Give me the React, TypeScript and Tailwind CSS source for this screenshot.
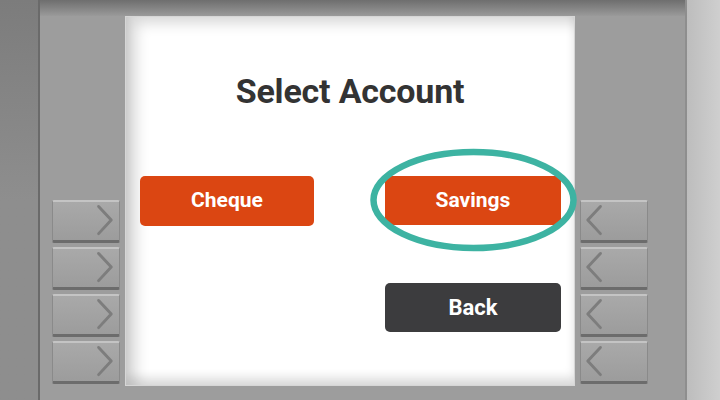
import React from 'react';

const font = { fontFamily: 'Roboto, "Liberation Sans", sans-serif' };

function SideKey({ side }: { side: 'left' | 'right' }) {
  return (
    <div className="h-[43px] w-[68px] flex items-center bg-gradient-to-b from-[#a9a9a9] to-[#9c9c9c] border-t-2 border-t-[#c4c4c4] border-b-[3px] border-b-[#6c6c6c] border-x border-x-[#8a8a8a] rounded-[2px]">
      <svg
        width="68"
        height="38"
        viewBox="0 0 68 38"
        className="block"
      >
        {side === 'left' ? (
          <polyline points="47,4 60,18 47,32" fill="none" stroke="#7d7d7d" strokeWidth="3" strokeLinecap="round" strokeLinejoin="round" />
        ) : (
          <polyline points="20,4 7,18 20,32" fill="none" stroke="#7d7d7d" strokeWidth="3" strokeLinecap="round" strokeLinejoin="round" />
        )}
      </svg>
    </div>
  );
}

export default function App() {
  return (
    <div className="relative w-[720px] h-[400px] overflow-hidden flex bg-[#9c9c9c]" style={font}>
      {/* left outer strip */}
      <div className="w-[40px] h-full bg-gradient-to-b from-[#7c7c7c] via-[#8e8e8e] to-[#8e8e8e] border-r-2 border-r-[#6a6a6a]" />

      {/* middle bezel */}
      <div className="flex-1 flex flex-col bg-[#9d9d9d]">
        <div className="h-[16px] bg-gradient-to-b from-[#6e6e6e] to-[#9a9a9a]" />
        <div className="flex flex-1">
          {/* left keys */}
          <div className="w-[85px] flex flex-col gap-[4px] pl-[12px] pt-[184px]">
            <SideKey side="left" />
            <SideKey side="left" />
            <SideKey side="left" />
            <SideKey side="left" />
          </div>

          {/* screen */}
          <div className="w-[450px] h-[370px] bg-white border border-[#d6d6d6] shadow-[inset_10px_6px_14px_rgba(0,0,0,0.16),inset_0_-8px_10px_rgba(0,0,0,0.12)] flex flex-col items-center">
            <h1 className="mt-[56px] h-[36px] leading-[36px] text-[34px] font-bold text-[#333333] tracking-[-0.2px]">
              Select Account
            </h1>
            <div className="mt-[67px] grid grid-cols-[174px_176px] gap-x-[71px] gap-y-[57px] self-start ml-[14px]">
              <button className="h-[50px] rounded-[5px] bg-[#db4612] text-white text-[21px] font-bold">
                Cheque
              </button>
              <button className="h-[49px] rounded-[2px] bg-[#db4612] text-white text-[21px] font-bold">
                Savings
              </button>
              <div />
              <button className="h-[49px] rounded-[5px] bg-[#3c3c3e] text-white text-[22px] font-bold">
                Back
              </button>
            </div>
          </div>

          {/* right keys */}
          <div className="w-[110px] flex flex-col gap-[4px] pl-[5px] pt-[184px]">
            <SideKey side="right" />
            <SideKey side="right" />
            <SideKey side="right" />
            <SideKey side="right" />
          </div>
        </div>
      </div>

      {/* right outer strip */}
      <div className="w-[35px] h-full bg-gradient-to-r from-[#bdbdbd] to-[#cfcfcf] border-l-2 border-l-[#8e8e8e]" />

      {/* highlight ring around Savings */}
      <svg className="absolute left-[368px] top-[147px]" width="211" height="106" viewBox="0 0 211 106">
        <ellipse cx="105.5" cy="53" rx="100" ry="48" fill="none" stroke="#3db3a2" strokeWidth="6.5" />
      </svg>
    </div>
  );
}
